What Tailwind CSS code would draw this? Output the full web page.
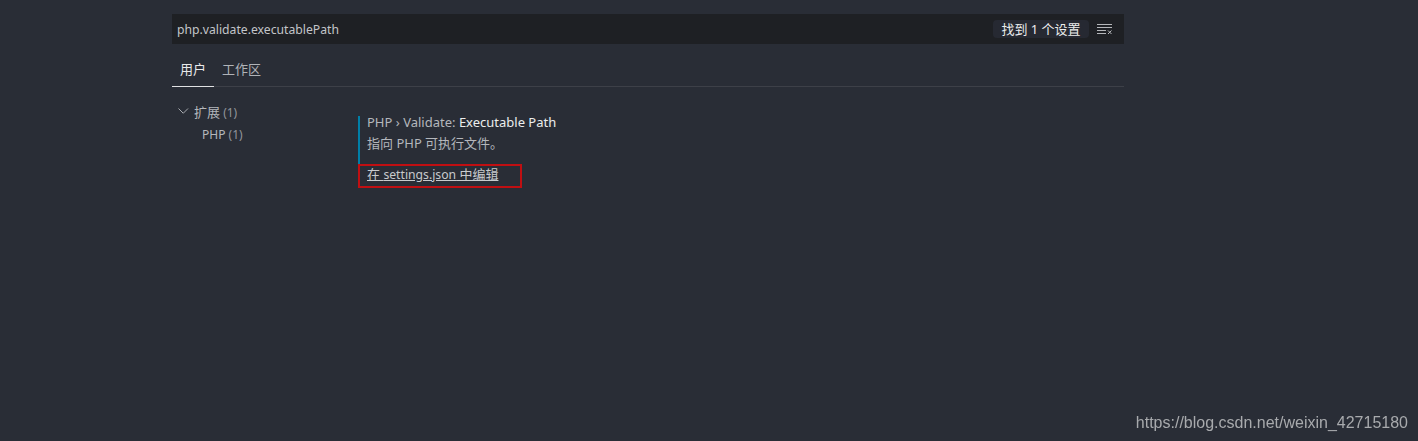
<!DOCTYPE html>
<html lang="zh-CN">
<head>
    <meta charset="UTF-8">
    <title>Settings</title>
    <script src="https://cdn.jsdelivr.net/npm/@tailwindcss/browser@4"></script>
</head>
<body class="bg-[#292d36] h-[441px] overflow-hidden relative text-[13px] leading-[20px] text-[#b4b7bc] font-['Noto_Sans','Noto_Sans_CJK_SC',sans-serif]">
    <div class="w-[952px] ml-[172px] pt-[14px]">

        <!-- Search -->
        <div class="h-[30px] bg-[#1e2024] flex items-center pl-[5px] pr-[12px] text-[#c3c5c9]">
            <span class="flex-1 pt-[2px] text-[12.2px]">php.validate.executablePath</span>
            <span class="w-[96px] h-[18px] flex justify-center items-center bg-[#262932] rounded-sm text-[#eceded] whitespace-pre">找到 1 个设置</span>
            <svg class="ml-[8px]" width="15" height="11" viewBox="0 0 15 11" fill="none" stroke="#b5b7ba" stroke-width="1">
                <path d="M0 .5h15M0 3.5h15M0 6.5h9M0 9.500h9M11 6.500l3.500 3.500M14.500 6.500 11 10"/>
            </svg>
        </div>

        <!-- Tabs -->
        <div class="flex h-[32px] mt-[11px] border-b border-[#3d4048]">
            <div class="w-[42px] h-[32px] pb-[4px] flex justify-center items-center border-b border-[#e0e1e3] text-[#e8e9ea]">用户</div>
            <div class="ml-[8px] h-[31px] pb-[4px] flex items-center text-[#b0b3b8]">工作区</div>
        </div>

        <div class="flex">
            <!-- Tree -->
            <div class="w-[186px] pt-[14px] pl-[5px] text-[12px]">
                <div class="flex items-center h-[20px]">
                    <svg width="12" height="12" viewBox="0 0 12 12" fill="none" stroke="#a8abb0" stroke-width="1">
                        <path d="M1.500 3.500 6.250 8.250 11 3.500"/>
                    </svg>
                    <span class="ml-[5px] pt-[2px]"><span class="text-[13px]">扩展</span> <span class="text-[#92959b]">(1)</span></span>
                </div>
                <div class="h-[20px] mt-[4px] ml-[25px] flex items-center">PHP&nbsp;<span class="text-[#92959b]">(1)</span></div>
            </div>

            <!-- Setting -->
            <div class="mt-[29px] relative h-[72px] border-l-2 border-[#007fa8] pl-[7px]">
                <div class="-mt-[4px] h-[20px] whitespace-pre">PHP › Validate: <span class="text-[#eceded]">Executable Path</span></div>
                <div class="mt-[1px] h-[20px]">指向 PHP 可执行文件。</div>
                <div class="mt-[11px] underline text-[#c8cacd] whitespace-pre">在 <span class="text-[12.2px]">settings.json</span> 中编辑</div>
                <!-- red annotation -->
                <div class="absolute -left-[2px] top-[48px] w-[164px] h-[24px] border-2 border-[#c00f12]"></div>
            </div>
        </div>
    </div>

    <!-- Watermark -->
    <div class="absolute right-[10px] top-[413px] font-['Liberation_Sans',sans-serif] text-[16px] text-[#a8aaad] blur-[0.3px]">https://blog.csdn.net/weixin_42715180</div>
</body>
</html>
